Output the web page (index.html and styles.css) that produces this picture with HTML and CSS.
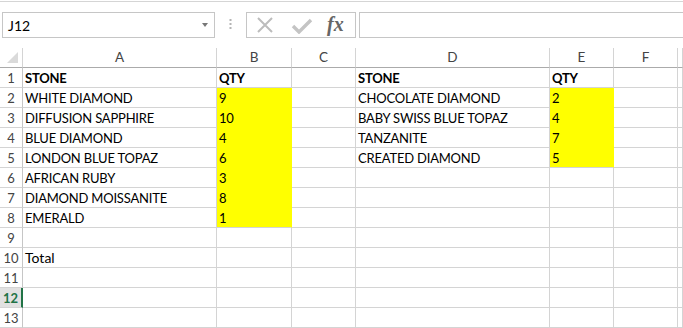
FILE: index.html
```
<!DOCTYPE html>
<html lang="en">
<head>
  <meta charset="UTF-8" />
  <title>Stones</title>
  <link rel="stylesheet" href="styles.css">
</head>
<body>
  <div class="ribbon">
    <div class="namebox"><span>J12</span><span class="caret"></span></div>
    <div class="grip">
      <svg width="30" height="26" viewBox="0 0 30 26">
        <rect x="13.5" y="7" width="2" height="2" fill="#b4b4b4"/>
        <rect x="13.5" y="11" width="2" height="2" fill="#b4b4b4"/>
        <rect x="13.5" y="15" width="2" height="2" fill="#b4b4b4"/>
      </svg>
    </div>
    <div class="fbtns">
      <svg class="cancel" width="18" height="18" viewBox="0 0 18 18">
        <path d="M2 2 L16 16 M16 2 L2 16" stroke="#bcbcbc" stroke-width="2" fill="none"/>
      </svg>
      <svg class="enter" width="22" height="16" viewBox="0 0 22 16">
        <path d="M2 8 L8 14 L20 2" stroke="#c4c4c4" stroke-width="3.4" fill="none"/>
      </svg>
      <span class="fx">fx</span>
    </div>
    <div class="finput"></div>
  </div>

  <div class="sheet">
    <div class="row head">
      <div class="corner"></div>
      <div class="ch">A</div><div class="ch">B</div><div class="ch">C</div>
      <div class="ch">D</div><div class="ch">E</div><div class="ch">F</div><div class="ch"></div>
    </div>
    <div class="row">
      <div class="rh">1</div>
      <div class="c b">STONE</div><div class="c b">QTY</div><div class="c"></div>
      <div class="c b">STONE</div><div class="c b">QTY</div><div class="c"></div><div class="c"></div>
    </div>
    <div class="row">
      <div class="rh">2</div>
      <div class="c">WHITE DIAMOND</div><div class="c fill">9</div><div class="c"></div>
      <div class="c">CHOCOLATE DIAMOND</div><div class="c fill">2</div><div class="c"></div><div class="c"></div>
    </div>
    <div class="row">
      <div class="rh">3</div>
      <div class="c">DIFFUSION SAPPHIRE</div><div class="c fill">10</div><div class="c"></div>
      <div class="c">BABY SWISS BLUE TOPAZ</div><div class="c fill">4</div><div class="c"></div><div class="c"></div>
    </div>
    <div class="row">
      <div class="rh">4</div>
      <div class="c">BLUE DIAMOND</div><div class="c fill">4</div><div class="c"></div>
      <div class="c">TANZANITE</div><div class="c fill">7</div><div class="c"></div><div class="c"></div>
    </div>
    <div class="row">
      <div class="rh">5</div>
      <div class="c">LONDON BLUE TOPAZ</div><div class="c fill">6</div><div class="c"></div>
      <div class="c">CREATED DIAMOND</div><div class="c fill end">5</div><div class="c"></div><div class="c"></div>
    </div>
    <div class="row">
      <div class="rh">6</div>
      <div class="c">AFRICAN RUBY</div><div class="c fill">3</div><div class="c"></div>
      <div class="c"></div><div class="c"></div><div class="c"></div><div class="c"></div>
    </div>
    <div class="row">
      <div class="rh">7</div>
      <div class="c">DIAMOND MOISSANITE</div><div class="c fill">8</div><div class="c"></div>
      <div class="c"></div><div class="c"></div><div class="c"></div><div class="c"></div>
    </div>
    <div class="row">
      <div class="rh">8</div>
      <div class="c">EMERALD</div><div class="c fill end">1</div><div class="c"></div>
      <div class="c"></div><div class="c"></div><div class="c"></div><div class="c"></div>
    </div>
    <div class="row">
      <div class="rh">9</div>
      <div class="c"></div><div class="c"></div><div class="c"></div>
      <div class="c"></div><div class="c"></div><div class="c"></div><div class="c"></div>
    </div>
    <div class="row">
      <div class="rh">10</div>
      <div class="c total">Total</div><div class="c"></div><div class="c"></div>
      <div class="c"></div><div class="c"></div><div class="c"></div><div class="c"></div>
    </div>
    <div class="row">
      <div class="rh">11</div>
      <div class="c"></div><div class="c"></div><div class="c"></div>
      <div class="c"></div><div class="c"></div><div class="c"></div><div class="c"></div>
    </div>
    <div class="row">
      <div class="rh active">12</div>
      <div class="c"></div><div class="c"></div><div class="c"></div>
      <div class="c"></div><div class="c"></div><div class="c"></div><div class="c"></div>
    </div>
    <div class="row">
      <div class="rh">13</div>
      <div class="c"></div><div class="c"></div><div class="c"></div>
      <div class="c"></div><div class="c"></div><div class="c"></div><div class="c"></div>
    </div>
  </div>
</body>
</html>
```

FILE: styles.css
```
* { box-sizing: border-box; }
body { margin: 0; background: #fff; color: #000; font-family: Lato, "Liberation Sans", sans-serif; font-size: 13px; overflow: hidden; }

/* formula bar */
.ribbon { margin-top: 1px; border-top: 1px solid #d5d5d5; padding: 10px 0 10px 2px; display: flex; align-items: center; }
.namebox { width: 213px; height: 26px; border: 1px solid #c6c6c6; display: flex; align-items: center; justify-content: space-between; padding: 0 6px 0 5px; font-size: 14px; }
.caret { width: 0; height: 0; border-left: 3.5px solid transparent; border-right: 3.5px solid transparent; border-top: 4px solid #777; }
.grip { width: 30px; height: 26px; margin-left: 1px; }
.grip svg { display: block; }
.fbtns { width: 110px; height: 26px; border: 1px solid #c6c6c6; display: flex; align-items: center; padding-left: 9px; }
.cancel { margin-right: 17px; }
.enter { margin-right: 14px; margin-top: 1px; }
.fx { font-family: "Liberation Serif", serif; font-style: italic; font-weight: bold; font-size: 20px; color: #666; line-height: 20px; margin-top: -2px; }
.finput { flex: 1; height: 26px; margin-left: 3px; border: 1px solid #c6c6c6; border-right: none; }

/* grid */
.row { display: grid; grid-template-columns: 23px 194px 75px 64px 194px 64px 64px 1fr; height: 20px; }
.row > div { border-right: 1px solid #d4d4d4; border-bottom: 1px solid #d4d4d4; padding-top: 1px; line-height: 18px; white-space: nowrap; overflow: hidden; }
.head > div { border-bottom-color: #ababab; }
.corner { position: relative; }
.corner::after { content: ""; position: absolute; right: 4px; bottom: 4px; width: 0; height: 0; border-left: 11px solid transparent; border-bottom: 11px solid #dadada; }
.ch { text-align: center; color: #444; font-size: 13.5px; line-height: 16px !important; }
.rh { text-align: center; color: #444; font-size: 13px; border-right-color: #c6c6c6 !important; }
.rh.active { background: #e1e1e1; color: #217346; font-weight: bold; border-right: 2px solid #217346 !important; }
.c { padding-left: 2px; letter-spacing: -0.2px; }
.total { font-size: 14px; letter-spacing: 0; }
.b { font-weight: bold; }
.fill { background: #ffff00; border-right-color: #ffff00 !important; border-bottom-color: #ffff00 !important; }
.fill.end { border-bottom-color: #d4d4d4 !important; }
```
